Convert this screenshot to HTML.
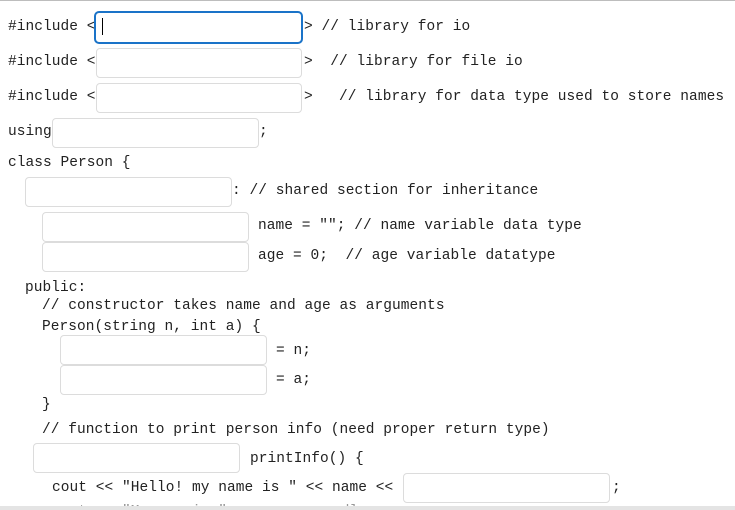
<!DOCTYPE html>
<html><head><style>
html,body{margin:0;padding:0;background:#fff;width:735px;height:510px;overflow:hidden;position:relative}
body{border-top:1px solid #bdbdbd;box-sizing:border-box}
.t{position:absolute;font-family:"Liberation Mono","DejaVu Sans Mono",monospace;font-size:14.5px;letter-spacing:0.05px;line-height:16px;color:#222;white-space:pre;margin-top:1px}
.i{position:absolute;box-sizing:border-box;border:1px solid #dcdcdc;border-radius:4px;background:#fff;width:207px;height:30px}
.f{border:2px solid #1a73c8;border-radius:5px}
.bar{position:absolute;left:0;top:505px;width:735px;height:5px;background:#e4e4e4}
</style></head><body>
<div class="t" style="left:8px;top:17px">#include &lt;</div>
<div class="i f" style="left:94px;top:10px;width:209px;height:33px"></div>
<div style="position:absolute;left:102px;top:17px;width:1px;height:17px;background:#000"></div>
<div class="t" style="left:304px;top:17px">&gt; // library for io</div>
<div class="t" style="left:8px;top:52px">#include &lt;</div>
<div class="i" style="left:96px;top:47px;width:206px"></div>
<div class="t" style="left:304px;top:52px">&gt;  // library for file io</div>
<div class="t" style="left:8px;top:87px">#include &lt;</div>
<div class="i" style="left:96px;top:82px;width:206px"></div>
<div class="t" style="left:304px;top:87px">&gt;   // library for data type used to store names</div>
<div class="t" style="left:8px;top:122px">using</div>
<div class="i" style="left:52px;top:117px"></div>
<div class="t" style="left:259px;top:122px">;</div>
<div class="t" style="left:8px;top:153px">class Person {</div>
<div class="i" style="left:25px;top:176px"></div>
<div class="t" style="left:232px;top:181px">: // shared section for inheritance</div>
<div class="i" style="left:42px;top:211px"></div>
<div class="t" style="left:258px;top:216px">name = ""; // name variable data type</div>
<div class="i" style="left:42px;top:241px"></div>
<div class="t" style="left:258px;top:246px">age = 0;  // age variable datatype</div>
<div class="t" style="left:25px;top:278px">public:</div>
<div class="t" style="left:42px;top:296px">// constructor takes name and age as arguments</div>
<div class="t" style="left:42px;top:317px">Person(string n, int a) {</div>
<div class="i" style="left:60px;top:334px"></div>
<div class="t" style="left:276px;top:341px">= n;</div>
<div class="i" style="left:60px;top:364px"></div>
<div class="t" style="left:276px;top:370px">= a;</div>
<div class="t" style="left:42px;top:395px">}</div>
<div class="t" style="left:42px;top:420px">// function to print person info (need proper return type)</div>
<div class="i" style="left:33px;top:442px"></div>
<div class="t" style="left:250px;top:449px">printInfo() {</div>
<div class="t" style="left:52px;top:478px">cout &lt;&lt; "Hello! my name is " &lt;&lt; name &lt;&lt;</div>
<div class="i" style="left:403px;top:472px"></div>
<div class="t" style="left:612px;top:478px">;</div>
<div class="t" style="left:52px;top:502px;color:#999">cout &lt;&lt; "My age is " &lt;&lt; age &lt;&lt; endl;</div>
<div class="bar"></div>
</body></html>
